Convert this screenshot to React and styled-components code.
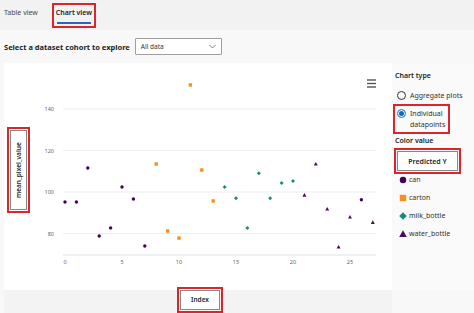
import React from "react";
import styled, { createGlobalStyle } from "styled-components";

// ------------------------------styles---------------------------------------
const GlobalStyle = createGlobalStyle`
  body {
    margin: 0;
    background: #f8f8f8;
    font-family: "Noto Sans", "Open Sans", sans-serif;
    color: #201f1e;
  }
`;

const Page = styled.div`
  width: 474px;
  height: 313px;
  overflow: hidden;
  display: flex;
  flex-direction: column;
`;

const TabBar = styled.div`
  height: 30px;
  display: flex;
  align-items: flex-start;
  gap: 10px;
  padding: 3px 0 0 0;
  box-sizing: border-box;
  background: #f2f2f2;
`;

const Tab = styled.div`
  position: relative;
  height: 25px;
  padding: 5px 4px 0;
  display: flex;
  align-items: flex-start;
  box-sizing: border-box;
  font-size: 7px;
  font-weight: ${(p) => (p.active ? 600 : 400)};
  color: ${(p) => (p.active ? "#201f1e" : "#484644")};
  outline: ${(p) => (p.highlight ? "2px solid #d9262c" : "none")};
  outline-offset: -2px;

  &::after {
    content: "";
    display: ${(p) => (p.active ? "block" : "none")};
    position: absolute;
    left: 5px;
    right: 5px;
    top: 19px;
    height: 2px;
    background: #2b63bf;
  }
`;

const CohortRow = styled.div`
  height: 33px;
  display: flex;
  align-items: center;
  gap: 5px;
  padding: 0 4px;
  box-sizing: border-box;
`;

const CohortLabel = styled.span`
  font-size: 7.5px;
  font-weight: 700;
`;

const Dropdown = styled.div`
  width: 87px;
  height: 17px;
  box-sizing: border-box;
  display: flex;
  align-items: center;
  justify-content: space-between;
  padding: 0 5px;
  background: #fff;
  border: 1px solid #a19f9d;
  border-radius: 1px;
  font-size: 6.5px;
  color: #323130;
`;

const Main = styled.div`
  display: flex;
  height: 227px;
`;

const ChartCard = styled.div`
  width: 388px;
  margin-left: 4px;
  background: #fff;
  display: flex;
`;

const YLabelColumn = styled.div`
  width: 28px;
  display: flex;
  justify-content: center;
  padding-top: 67px;
  box-sizing: border-box;
`;

const AxisButton = styled.div`
  box-sizing: border-box;
  display: flex;
  align-items: center;
  justify-content: center;
  background: #fff;
  border: 1px solid #8a8886;
  font-size: 6.5px;
  font-weight: 600;
  color: #201f1e;
  outline: 2px solid #d9262c;
  outline-offset: 1px;
  ${(p) =>
    p.vertical
      ? `writing-mode: vertical-rl; transform: rotate(180deg); width: 17px; height: 80px;`
      : `width: 40px; height: 20px; margin-top: -4px;`}
`;

const SidePanel = styled.div`
  flex: 1;
  background: #fafafa;
  padding: 8px 0 0 3px;
  display: flex;
  flex-direction: column;
  align-items: flex-start;
`;

const PanelTitle = styled.div`
  font-size: 7px;
  font-weight: 600;
  margin: ${(p) => p.margin || "0"};
`;

const RadioOption = styled.div`
  display: flex;
  align-items: flex-start;
  gap: 4px;
  padding: 2px;
  margin-top: ${(p) => p.gap || "0"};
  font-size: 7px;
  line-height: 11px;
  color: #323130;
  outline: ${(p) => (p.highlight ? "2px solid #d9262c" : "none")};
`;

const RadioCircle = styled.span`
  flex: none;
  width: 9px;
  height: 9px;
  margin-top: 1px;
  box-sizing: border-box;
  border-radius: 50%;
  border: 1px solid ${(p) => (p.checked ? "#0f6cbd" : "#323130")};
  display: flex;
  align-items: center;
  justify-content: center;

  &::after {
    content: "";
    display: ${(p) => (p.checked ? "block" : "none")};
    width: 5px;
    height: 5px;
    border-radius: 50%;
    background: #0f6cbd;
  }
`;

const RadioText = styled.span`
  width: ${(p) => p.width || "auto"};
`;

const ColorButton = styled.div`
  margin: 6px 0 0 2px;
  width: 61px;
  height: 20px;
  box-sizing: border-box;
  display: flex;
  align-items: center;
  justify-content: center;
  background: #fff;
  border: 1px solid #8a8886;
  font-size: 7px;
  font-weight: 600;
  outline: 2px solid #d9262c;
  outline-offset: 1px;
`;

const Legend = styled.div`
  display: flex;
  flex-direction: column;
  gap: 7px;
  margin: 3px 0 0 4px;
`;

const LegendItem = styled.div`
  display: flex;
  align-items: center;
  gap: 2px;
  height: 11px;
  font-size: 7px;
  color: #323130;
`;

const BottomRow = styled.div`
  flex: 1;
  width: 388px;
  margin-left: 4px;
  padding-left: 4px;
  box-sizing: border-box;
  display: flex;
  justify-content: center;
  align-items: center;
  background: #f3f3f3;
`;
// ------------------------------styles---------------------------------------

const COLORS = {
  can: "#440154",
  carton: "#f7901e",
  milk_bottle: "#1d8a78",
  water_bottle: "#4a0c5c",
};

const points = [
  ["can", 0, 95.2], ["can", 1, 95.2], ["can", 2, 111.6], ["can", 3, 78.8],
  ["can", 4, 82.7], ["can", 5, 102.4], ["can", 6, 96.6], ["can", 7, 74],
  ["carton", 8, 113.5], ["carton", 9, 81.2], ["carton", 10, 77.8],
  ["carton", 11, 151.6], ["carton", 12, 110.6], ["carton", 13, 95.7],
  ["milk_bottle", 14, 102.4], ["milk_bottle", 15, 97], ["milk_bottle", 16, 82.6],
  ["milk_bottle", 17, 109], ["milk_bottle", 18, 97], ["milk_bottle", 19, 104.3],
  ["milk_bottle", 20, 105.3],
  ["water_bottle", 21, 98.5], ["water_bottle", 22, 113.5], ["water_bottle", 23, 91.8],
  ["water_bottle", 24, 73.5], ["water_bottle", 25, 88], ["can", 26, 96.3],
  ["water_bottle", 27, 85.4],
];

const px = (i) => 33 + i * 11.4;
const py = (v) => 129 - (v - 100) * 2.075;

const Marker = ({ kind, x, y, s = 1 }) => {
  const c = COLORS[kind];
  if (kind === "can") return <circle cx={x} cy={y} r={1.7 * s} fill={c} />;
  if (kind === "carton")
    return <rect x={x - 1.7 * s} y={y - 1.7 * s} width={3.4 * s} height={3.4 * s} fill={c} />;
  if (kind === "milk_bottle")
    return (
      <path
        d={`M${x} ${y - 2 * s}L${x + 2 * s} ${y}L${x} ${y + 2 * s}L${x - 2 * s} ${y}Z`}
        fill={c}
      />
    );
  return (
    <path
      d={`M${x} ${y - 2 * s}L${x + 2 * s} ${y + 1.6 * s}L${x - 2 * s} ${y + 1.6 * s}Z`}
      fill={c}
    />
  );
};

const Plot = () => (
  <svg width="360" height="227" viewBox="0 0 360 227">
    {[140, 120, 100, 80].map((v) => (
      <g key={v}>
        <line x1="31" x2="344" y1={py(v)} y2={py(v)} stroke="#eeeeee" strokeWidth="1" />
        <text
          x="22"
          y={py(v) + 2}
          textAnchor="end"
          fontSize="5.5"
          fill="#666"
          fontFamily="Noto Sans, sans-serif"
        >
          {v}
        </text>
      </g>
    ))}
    <line x1="31" x2="344" y1="192" y2="192" stroke="#dde3ea" strokeWidth="1" />
    {[0, 5, 10, 15, 20, 25].map((k) => (
      <text
        key={k}
        x={px(k)}
        y="201"
        textAnchor="middle"
        fontSize="5.5"
        fill="#666"
        fontFamily="Noto Sans, sans-serif"
      >
        {k}
      </text>
    ))}
    {points.map(([kind, i, v]) => (
      <Marker key={i} kind={kind} x={px(i)} y={py(v)} />
    ))}
    <g stroke="#555" strokeWidth="1.4">
      <line x1="335" x2="344" y1="17" y2="17" />
      <line x1="335" x2="344" y1="20.5" y2="20.5" />
      <line x1="335" x2="344" y1="24" y2="24" />
    </g>
  </svg>
);

const legendItems = ["can", "carton", "milk_bottle", "water_bottle"];

// ------------------------main component--------------------------------------
const App = () => {
  return (
    <Page>
      <GlobalStyle />
      <TabBar>
        <Tab>Table view</Tab>
        <Tab active highlight>
          Chart view
        </Tab>
      </TabBar>

      <CohortRow>
        <CohortLabel>Select a dataset cohort to explore</CohortLabel>
        <Dropdown>
          <span>All data</span>
          <svg width="7" height="5" viewBox="0 0 7 5">
            <path d="M0.5 1L3.5 4L6.5 1" fill="none" stroke="#605e5c" strokeWidth="0.8" />
          </svg>
        </Dropdown>
      </CohortRow>

      <Main>
        <ChartCard>
          <YLabelColumn>
            <AxisButton vertical>mean_pixel_value</AxisButton>
          </YLabelColumn>
          <Plot />
        </ChartCard>

        <SidePanel>
          <PanelTitle>Chart type</PanelTitle>
          <RadioOption gap="8px">
            <RadioCircle />
            <RadioText>Aggregate plots</RadioText>
          </RadioOption>
          <RadioOption checked highlight gap="3px">
            <RadioCircle checked />
            <RadioText width="36px">Individual datapoints</RadioText>
          </RadioOption>
          <PanelTitle margin="4px 0 0 0">Color value</PanelTitle>
          <ColorButton>Predicted Y</ColorButton>
          <Legend>
            {legendItems.map((k) => (
              <LegendItem key={k}>
                <svg width="8" height="8" viewBox="0 0 8 8">
                  <Marker kind={k} x={4} y={4} s={1.9} />
                </svg>
                {k}
              </LegendItem>
            ))}
          </Legend>
        </SidePanel>
      </Main>

      <BottomRow>
        <AxisButton>Index</AxisButton>
      </BottomRow>
    </Page>
  );
};

export default App;
